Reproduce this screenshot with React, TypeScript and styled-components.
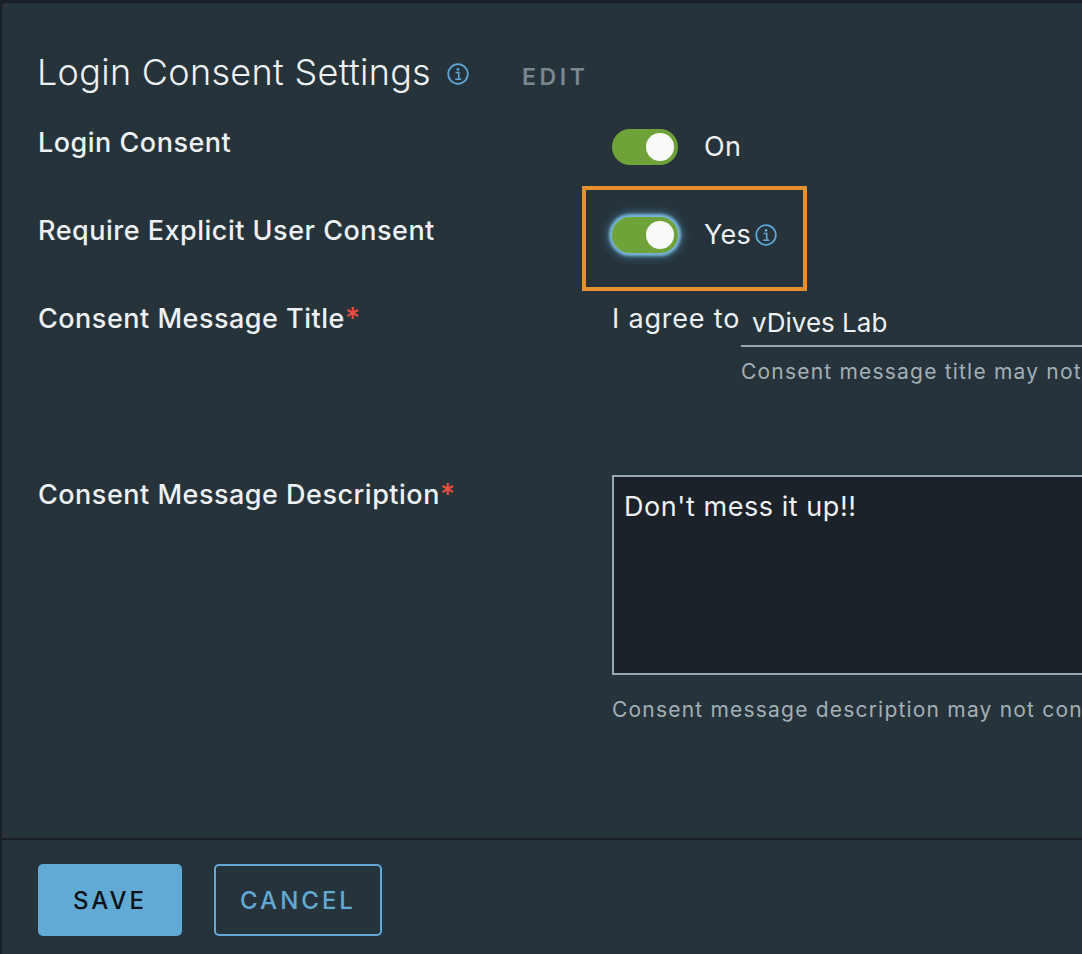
import { createGlobalStyle } from "styled-components";
import styled from "styled-components";

const GlobalStyle = createGlobalStyle`
  html, body {
    margin: 0;
    height: 100%;
    overflow: hidden;
    background: #1a2027;
  }
  #root {
    height: 100%;
  }
`;

const FONT = `Inter, "Noto Sans", sans-serif`;

function InfoIcon({ size }: { size: number }) {
  return (
    <svg width={size} height={size} viewBox="0 0 24 24" fill="none">
      <circle cx="12" cy="12" r="10.7" stroke="#5fa8d6" strokeWidth="1.9" />
      <circle cx="12" cy="6.9" r="1.5" fill="#5fa8d6" />
      <path
        d="M9.4 10.4h3.4v7.2M9 17.7h6.6"
        stroke="#5fa8d6"
        strokeWidth="1.7"
      />
    </svg>
  );
}

export default function App() {
  return (
    <Page>
      <GlobalStyle />
      <Panel>
        <Body>
          <Header>
            <Title>Login Consent Settings</Title>
            <InfoIcon size={22} />
            <EditLink>EDIT</EditLink>
          </Header>

          <Row $height={88}>
            <Label $nudge={1}>Login Consent</Label>
            <Toggle>
              <Switch />
              <ToggleText>On</ToggleText>
            </Toggle>
          </Row>

          <Row $height={88}>
            <Label $nudge={1}>Require Explicit User Consent</Label>
            <Toggle>
              <Switch $focused />
              <ToggleText>Yes</ToggleText>
              <InfoGap>
                <InfoIcon size={22} />
              </InfoGap>
              <Highlight />
            </Toggle>
          </Row>

          <Row $height={176}>
            <Label>
              Consent Message Title<Star>*</Star>
            </Label>
            <TitleField>
              <Prefix>I agree to</Prefix>
              <InputColumn>
                <InputValue>vDives Lab</InputValue>
                <Hint $gap={12}>Consent message title may not contain the word accept</Hint>
              </InputColumn>
            </TitleField>
          </Row>

          <Row $height={260}>
            <Label>
              Consent Message Description<Star>*</Star>
            </Label>
            <DescriptionField>
              <TextBox>Don't mess it up!!</TextBox>
              <Hint $gap={22}>Consent message description may not contain the word accept</Hint>
            </DescriptionField>
          </Row>
        </Body>

        <Footer>
          <SaveButton>SAVE</SaveButton>
          <CancelButton>CANCEL</CancelButton>
        </Footer>
      </Panel>
    </Page>
  );
}

const Page = styled.div`
  height: 100%;
  padding: 3px 0 0 2px;
  box-sizing: border-box;
  overflow: hidden;
  font-family: ${FONT};
`;

const Panel = styled.div`
  width: 1300px;
  height: 100%;
  display: flex;
  flex-direction: column;
  background: #26333b;
  border-radius: 4px 0 0 0;
  color: #eef1f3;
`;

const Body = styled.div`
  flex: 1;
  padding: 0 0 0 36px;
`;

const Header = styled.div`
  height: 122px;
  box-sizing: border-box;
  padding-top: 46px;
  display: flex;
  align-items: flex-start;

  svg {
    margin: 14px 0 0 16px;
  }
`;

const Title = styled.div`
  font-size: 36px;
  line-height: 46px;
  font-weight: 300;
  letter-spacing: 0.3px;
  margin-left: -1px;
`;

const EditLink = styled.div`
  margin: 16px 0 0 53px;
  font-size: 23px;
  line-height: 24px;
  font-weight: 600;
  letter-spacing: 3.6px;
  color: #7c878d;
`;

const Row = styled.div<{ $height: number }>`
  height: ${(p) => p.$height}px;
  display: flex;
  align-items: flex-start;
`;

const Label = styled.div<{ $nudge?: number }>`
  width: 574px;
  flex-shrink: 0;
  padding-top: ${(p) => p.$nudge ?? 0}px;
  font-size: 27px;
  line-height: 34px;
  font-weight: 500;
  letter-spacing: 0.5px;
`;

const Star = styled.span`
  color: #e8503f;
  font-size: 29px;
`;

const Toggle = styled.div`
  position: relative;
  display: flex;
  align-items: center;
  height: 36px;
  margin-top: 4px;
`;

const Switch = styled.div<{ $focused?: boolean }>`
  position: relative;
  width: 66px;
  height: 36px;
  border-radius: 18px;
  background: #6fa33a;
  box-shadow: ${(p) =>
    p.$focused ? "0 0 3px 3px #78b8dc, 0 0 8px 5px rgba(95, 168, 214, 0.4)" : "none"};

  &::after {
    content: "";
    position: absolute;
    top: 4px;
    right: 4px;
    width: 28px;
    height: 28px;
    border-radius: 50%;
    background: #fafafa;
  }
`;

const ToggleText = styled.div`
  margin-left: 26px;
  font-size: 27px;
  line-height: 36px;
  font-weight: 400;
  letter-spacing: 0.3px;
`;

const InfoGap = styled.div`
  display: flex;
  margin-left: 4px;
`;

const Highlight = styled.div`
  position: absolute;
  left: -30px;
  top: -31px;
  width: 225px;
  height: 105px;
  box-sizing: border-box;
  border: 4px solid #e6902f;
`;

const TitleField = styled.div`
  display: flex;
  align-items: flex-start;
  flex: 1;
`;

const Prefix = styled.div`
  width: 129px;
  flex-shrink: 0;
  padding-top: 1px;
  font-size: 27px;
  line-height: 34px;
  font-weight: 400;
  letter-spacing: 0.8px;
`;

const InputColumn = styled.div`
  flex: 1;
`;

const InputValue = styled.div`
  height: 46px;
  box-sizing: border-box;
  padding: 5px 0 0 11px;
  font-size: 26px;
  line-height: 34px;
  border-bottom: 2px solid #9aa7ae;
`;

const Hint = styled.div<{ $gap: number }>`
  margin-top: ${(p) => p.$gap}px;
  font-size: 21px;
  line-height: 26px;
  letter-spacing: 1.2px;
  color: #a3afb5;
  white-space: nowrap;
`;

const DescriptionField = styled.div`
  flex: 1;
  margin-top: -2px;
`;

const TextBox = styled.div`
  height: 200px;
  box-sizing: border-box;
  padding: 12px 10px;
  font-size: 27px;
  line-height: 36px;
  letter-spacing: 0.55px;
  background: #1c2229;
  border: 2px solid #9aa7ae;
`;

const Footer = styled.div`
  height: 116px;
  flex-shrink: 0;
  box-sizing: border-box;
  padding: 24px 0 0 36px;
  display: flex;
  align-items: flex-start;
  gap: 32px;
  border-top: 2px solid #171d22;
`;

const SaveButton = styled.button`
  width: 144px;
  height: 72px;
  padding: 0;
  border: none;
  border-radius: 5px;
  background: #62aad6;
  color: #0c1217;
  font-family: ${FONT};
  font-size: 24px;
  font-weight: 500;
  letter-spacing: 3px;
`;

const CancelButton = styled.button`
  width: 168px;
  height: 72px;
  padding: 0;
  border: 2px solid #62aad6;
  border-radius: 5px;
  background: transparent;
  color: #62aad6;
  font-family: ${FONT};
  font-size: 24px;
  font-weight: 500;
  letter-spacing: 3px;
`;
